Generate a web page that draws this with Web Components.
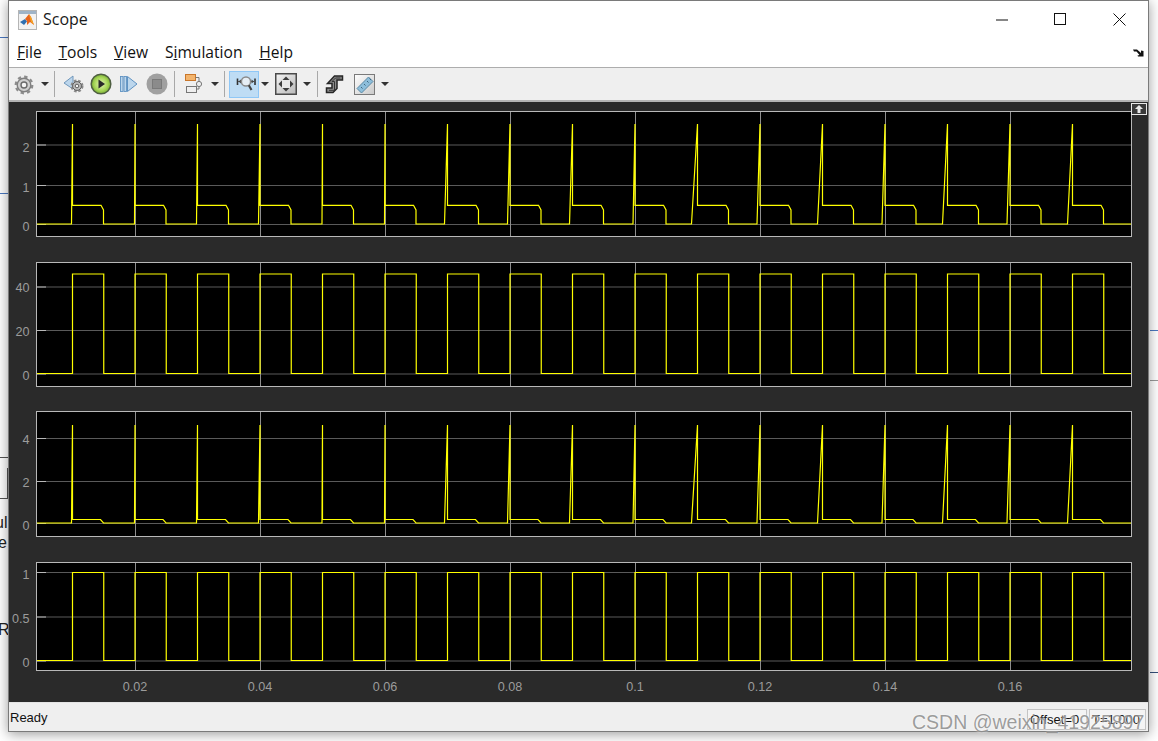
<!DOCTYPE html>
<html lang="en"><head><meta charset="utf-8"><title>Scope</title>
<style>
html,body{margin:0;padding:0;width:1158px;height:741px;overflow:hidden;background:#fff}
</style></head><body>
<desk-top>
  <span slot="scraps" style="position:absolute;left:0;top:37px;width:9px;height:1px;background:#4a78c0"></span>
  <span slot="scraps" style="position:absolute;left:0;top:193px;width:9px;height:1px;background:#4a78c0"></span>
  <span slot="scraps" style="position:absolute;left:0;top:457px;width:9px;height:1px;background:#555"></span>
  <span slot="scraps" style="position:absolute;left:0;top:498px;width:9px;height:1px;background:#555"></span>
  <span slot="scraps" style="position:absolute;left:7px;top:468px;width:1px;height:30px;background:#555"></span>
  <span slot="scraps" style="position:absolute;left:-5px;top:514px;font-size:16px">ul</span>
  <span slot="scraps" style="position:absolute;left:-2px;top:534px;font-size:16px">e</span>
  <span slot="scraps" style="position:absolute;left:-2px;top:621px;font-size:16px">R</span>
  <span slot="scraps" style="position:absolute;left:1150px;top:330px;width:8px;height:1px;background:#4a78c0"></span>
  <span slot="scraps" style="position:absolute;left:1150px;top:380px;width:8px;height:1px;background:#999"></span>
  <span slot="scraps" style="position:absolute;left:1150px;top:672px;width:8px;height:1px;background:#35507a"></span>
  <scope-window>
    <title-bar>Scope</title-bar>
    <menu-bar>
      <menu-item><u>F</u>ile</menu-item>
      <menu-item><u>T</u>ools</menu-item>
      <menu-item><u>V</u>iew</menu-item>
      <menu-item>S<u>i</u>mulation</menu-item>
      <menu-item><u>H</u>elp</menu-item>
    </menu-bar>
    <tool-bar></tool-bar>
    <scope-plots>
      <scope-axes kind="spike" h="126" mt="9" base="224" low="224" top="124" plat="205.3" fs="28.5" fe="31" corner="210" y0="111"
        ticks="2:145:152,1:185.5:192,0:224.5:231"></scope-axes>
      <scope-axes kind="square" h="125" mt="25" base="373.5" top="274" y0="262"
        ticks="40:287:292,20:330.5:336,0:374:380"></scope-axes>
      <scope-axes kind="spike" h="126" mt="24" base="523" low="523" top="425" plat="519.5" fs="28" fe="31" corner="523" y0="411"
        ticks="4:438.5:444,2:481.5:487,0:523.5:530"></scope-axes>
      <scope-axes kind="square" h="140" mt="25" base="660.5" top="572.5" y0="562" axis-bottom="670.5" xlabels="1"
        ticks="1:572.5:579,0.5:617:623,0:661:667"></scope-axes>
    </scope-plots>
    <status-bar></status-bar>
  </scope-window>
  <span slot="mark" style="position:absolute;left:912px;top:711px;font:19.5px 'Liberation Sans',sans-serif;color:rgba(125,125,125,.75);text-shadow:0 0 2px rgba(255,255,255,.9);white-space:nowrap;">CSDN @weixin_41925897</span>
</desk-top>
<script>
function def(name, html, init){
  customElements.define(name, class extends HTMLElement{
    constructor(){super();this.attachShadow({mode:'open'}).innerHTML=html;}
    connectedCallback(){ if(init) init.call(this,this.shadowRoot); }
  });
}
def('desk-top',`<style>
:host{display:block;position:relative;width:1158px;height:741px;overflow:hidden;background:#fff;font:14px 'Liberation Sans',sans-serif;color:#222}
</style><slot name="scraps"></slot><slot></slot><slot name="mark"></slot>`);

def('scope-window',`<style>
:host{position:absolute;left:8px;top:0;width:1139px;height:730px;border:1px solid #7a7a7a;background:#fff;display:flex;flex-direction:column;box-shadow:0 2px 12px rgba(0,0,0,.4)}
</style><slot></slot>`);

def('title-bar',`<style>
:host{display:flex;align-items:center;height:36px;flex:none;background:#fff;font:16px 'Open Sans',sans-serif;color:#1a1a1a}
svg.logo{margin-left:9px;margin-right:6px;margin-top:1px}
.t{padding-bottom:1px}
.b{width:58px;height:36px;display:flex;align-items:center;justify-content:center;box-sizing:border-box}
.n{padding-right:2px}
.s{margin-left:auto}
</style>
<svg class="logo" width="19" height="20" viewBox="0 0 19 20">
  <rect x=".5" y=".5" width="18" height="19" fill="#f2f2f2" stroke="#b5b5b5"/>
  <rect x="1" y="1" width="17" height="3" fill="#9fb4c8"/>
  <polygon points="2,12 7,9 9,11.5 6,15" fill="#2f6fb0"/>
  <polygon points="7,9 11,4 13,7 16,15 12,12 9,15 9,11" fill="#e8641c"/>
  <polygon points="11,4 13,7 16,15 13,12" fill="#f5a623"/>
</svg>
<span class="t"><slot></slot></span>
<span class="b s n"><svg width="12" height="2" viewBox="0 0 12 2" style="margin-top:1px"><rect width="12" height="1" y=".5" fill="#111"/></svg></span>
<span class="b n"><svg width="12" height="12" viewBox="0 0 12 12"><rect x=".5" y=".5" width="11" height="11" fill="none" stroke="#111"/></svg></span>
<span class="b"><svg width="13" height="13" viewBox="0 0 13 13"><path d="M.5 .5 12.5 12.5M12.5 .5 .5 12.5" stroke="#111" fill="none"/></svg></span>`);

def('menu-bar',`<style>
:host{display:flex;align-items:center;gap:16.800px;height:30px;flex:none;padding-left:8px;background:#fff;font:15.600px 'Open Sans',sans-serif;color:#111;position:relative}
svg{margin-left:auto;margin-right:4px;margin-top:0}
</style><slot></slot>
<svg width="11" height="9" viewBox="0 0 11 9"><path d="M0 1.5H4L8 5V2.5L10.5 3V8.5H5L4.5 7.5 6.5 7 3.5 3.5H1Z" fill="#111"/></svg>`);
def('menu-item',`<style>:host{display:inline-block;line-height:20px}</style><slot></slot>`);

const arrow=(ml)=>`<svg style="margin-left:${ml}px" width="8" height="4" viewBox="0 0 8 4"><polygon points="0,0 8,0 4,4" fill="#333"/></svg>`;
const sep=(ml)=>`<span class="sep" style="margin-left:${ml}px"></span>`;
def('tool-bar',`<style>
:host{display:flex;align-items:center;flex:none;height:32px;background:#efefef;border-top:1px solid #adadad;border-bottom:2px solid #b4b4b4;padding-left:5px;box-sizing:content-box}
.sep{width:1px;height:26px;background:#a8a8a8;flex:none}
svg{flex:none;display:block}
.on{margin-left:4px;width:28px;height:25px;background:#bedcf4;border:1px solid #8fc7f6;display:flex;align-items:center;justify-content:center;flex:none}
</style>
<svg width="20" height="20" viewBox="0 0 20 20" style="margin-top:1px">
  <circle cx="10" cy="10" r="8.300" fill="none" stroke="#8c8c8c" stroke-width="2.200" stroke-dasharray="3.400 3.100"/>
  <circle cx="10" cy="10" r="6.800" fill="#cfcfcf" stroke="#808080" stroke-width="1.400"/>
  <circle cx="10" cy="10" r="3" fill="#f4f4f4" stroke="#6a6a6a" stroke-width="1.400"/>
</svg>
${arrow(7)}${sep(5)}
<svg style="margin-left:8px" width="21" height="20" viewBox="0 0 21 20">
  <polygon points="1,9 10,2 10,15" fill="#bcd6ec" stroke="#7097bb"/>
  <circle cx="14" cy="12" r="5" fill="none" stroke="#8a8a8a" stroke-width="3" stroke-dasharray="2.400 1.600"/>
  <circle cx="14" cy="12" r="4.400" fill="#bdbdbd" stroke="#5d5d5d"/>
  <circle cx="14" cy="12" r="1.800" fill="#f2f2f2" stroke="#444" stroke-width=".8"/>
</svg>
<svg style="margin-left:6px" width="22" height="22" viewBox="0 0 22 22">
  <defs><radialGradient id="g" cx=".5" cy=".5" r=".55"><stop offset="0" stop-color="#e6f5b8"/><stop offset=".6" stop-color="#a8d75a"/><stop offset="1" stop-color="#6ea72a"/></radialGradient></defs>
  <circle cx="11" cy="11" r="9.800" fill="url(#g)" stroke="#4f5f42" stroke-width="1.500"/>
  <polygon points="8.500,6.500 15,11 8.500,15.500" fill="#2a2a2a"/>
</svg>
<svg style="margin-left:8px" width="18" height="20" viewBox="0 0 18 20">
  <rect x=".5" y="2.500" width="2.500" height="15" fill="#bcd6ec" stroke="#5f92c2" stroke-width=".9"/>
  <rect x="4" y="2.500" width="2.500" height="15" fill="#bcd6ec" stroke="#5f92c2" stroke-width=".9"/>
  <polygon points="7.500,2.500 17,10 7.500,17.500" fill="#bcd6ec" stroke="#5f92c2"/>
</svg>
<svg style="margin-left:8px" width="22" height="22" viewBox="0 0 22 22">
  <circle cx="11" cy="11" r="10.500" fill="#a0a0a0"/>
  <rect x="6.500" y="6.500" width="9" height="9" fill="#8b8b8b" stroke="#7a7a7a"/>
</svg>
${sep(6)}
<svg style="margin-left:9px" width="20" height="22" viewBox="0 0 20 22">
  <rect x="1.500" y="1.500" width="10" height="6" fill="#f3b46c" stroke="#c9762a"/>
  <path d="M11.500 4.500H15V9" fill="none" stroke="#777"/>
  <circle cx="15" cy="11" r="2.600" fill="#eee" stroke="#777"/>
  <rect x="2.500" y="13.500" width="10" height="6" fill="#efefef" stroke="#777"/>
  <path d="M12.500 16H15V13.500" fill="none" stroke="#777"/>
</svg>
${arrow(7)}${sep(5)}
<span class="on"><svg width="26" height="22" viewBox="0 0 26 22">
  <path d="M6.500 5.500V12M24 5.500V12" stroke="#333" stroke-width="1.600"/>
  <path d="M7 8.500H10.500M19.500 8.500H23.500" stroke="#555" stroke-width="1.200"/>
  <polygon points="7.500,8.500 10,6.500 10,10.500" fill="#444"/>
  <polygon points="23,8.500 20.500,6.500 20.500,10.500" fill="#444"/>
  <circle cx="15" cy="8.500" r="4.600" fill="#e6eef5" stroke="#8a8a8a" stroke-width="1.500"/>
  <path d="M17.800 12.300 20.500 17" stroke="#444" stroke-width="2.200"/>
</svg></span>
${arrow(2)}
<svg style="margin-left:6px" width="22" height="22" viewBox="0 0 22 22">
  <defs><linearGradient id="fg" x1="0" y1="0" x2="1" y2="1"><stop offset="0" stop-color="#f4f4f4"/><stop offset="1" stop-color="#b8b8b8"/></linearGradient></defs>
  <rect x=".75" y=".75" width="20.500" height="20.500" fill="url(#fg)" stroke="#4a4a4a" stroke-width="1.500"/>
  <polygon points="11,3.500 14.500,7 7.500,7" fill="#3c3c3c"/><polygon points="11,18.500 14.500,15 7.500,15" fill="#3c3c3c"/>
  <polygon points="3.500,11 7,7.500 7,14.500" fill="#3c3c3c"/><polygon points="18.500,11 15,7.500 15,14.500" fill="#3c3c3c"/>
  <rect x="7" y="7" width="8" height="8" fill="#e8e8e8"/>
</svg>
${arrow(6)}${sep(6)}
<svg style="margin-left:7px" width="19" height="20" viewBox="0 0 19 20">
  <path d="M1.500 18.500V14H7V9.500H2.500L9.500 2H17.500V6H12V14.500L8 18.500Z" fill="#8a8a8a" stroke="#262626" stroke-width="1.500"/>
  <path d="M4 16.300H9.500V7.500H7L10.500 4H15.500" fill="none" stroke="#333" stroke-width="1"/>
</svg>
<svg style="margin-left:10px" width="21" height="21" viewBox="0 0 21 21">
  <defs><linearGradient id="rg" x1="0" y1="0" x2="1" y2="1"><stop offset="0" stop-color="#fff"/><stop offset="1" stop-color="#c9c9c9"/></linearGradient></defs>
  <rect x=".5" y=".5" width="20" height="20" fill="url(#rg)" stroke="#7a7a7a"/>
  <polygon points="3,14.500 14.500,3 19,7.500 7.500,19" fill="#8dbedb" stroke="#5b8aa6"/>
  <path d="M7 13 8.500 14.500M10 10 11.500 11.500M13 7 14.500 8.500M15.500 4.500 17 6" stroke="#3d6780"/>
</svg>
${arrow(6)}`);

def('scope-plots',`<style>
:host{display:block;flex:none;height:600px;background:#2a2a2a;position:relative;overflow:hidden}
.up{position:absolute;left:1122px;top:1px;width:14px;height:10px;border:1px solid #e8e8e8;background:#3a3a3a}
svg{display:block}
</style><slot></slot>
<span class="up"><svg width="14" height="10" viewBox="0 0 14 10"><polygon points="7,1 11,5 8.500,5 8.500,9 5.500,9 5.500,5 3,5" fill="#e8e8e8"/></svg></span>`);

def('scope-axes',`<style>
:host{display:block}
svg{display:block}
text{font:12.600px 'Liberation Sans',sans-serif;fill:#9c9c9c}
</style><svg></svg>`, function(r){
  const a=k=>this.getAttribute(k), n=k=>parseFloat(a(k));
  const y0=n('y0'), h=n('h');
  this.style.marginTop=a('mt')+'px';
  this.style.height=h+'px';
  const bottom=a('axis-bottom')?n('axis-bottom'):y0+h-.5;
  const L=36.5,R=1131.5,T=y0+.5;
  const xs=[];for(let k=0;k<17;k++)xs.push(72.5+62.5*k);
  const W=[1,.5,1,1.5,.5,.5,3,2.5,3,2,6,3,5,3,5,3,5];
  let p=[];
  if(a('kind')==='spike'){
    const base=n('base'),top=n('top'),plat=n('plat'),fs=n('fs'),fe=n('fe'),c=n('corner');
    p.push([L,base]);
    xs.forEach((x,i)=>{
      p.push([x-W[i],base],[x,top],[x,plat],[x+fs,plat],[x+fe,c],[x+fe,base]);
    });
    p.push([R,base]);
  }else{
    const base=n('base'),top=n('top');
    p.push([L,base]);
    xs.forEach(x=>{p.push([x,base],[x,top],[x+31.25,top],[x+31.25,base]);});
    p.push([R,base]);
  }
  let s='';
  a('ticks').split(',').forEach(t=>{
    const [lab,y,by]=t.split(':');
    s+=`<path d="M${L} ${y}H${R}" stroke="#5a5a5a"/><path d="M${L} ${y}H46" stroke="#b8b8b8"/>`;
    s+=`<text x="29.500" y="${by}" text-anchor="end">${lab}</text>`;
  });
  let xl='';
  ['0.02','0.04','0.06','0.08','0.1','0.12','0.14','0.16'].forEach((lab,i)=>{
    const x=135.5+125*i;
    s+=`<path d="M${x} ${T}V${bottom}" stroke="#8e8e8e"/>`;
    if(a('xlabels'))xl+=`<text x="${x-.5}" y="691" text-anchor="middle">${lab}</text>`;
  });
  s+=`<polyline fill="none" stroke="#ffff00" stroke-width="1.200" points="${p.map(q=>q.join(',')).join(' ')}"/>`;
  s+=`<rect x="${L}" y="${T}" width="${R-L}" height="${bottom-T}" fill="none" stroke="#b8b8b8"/>`;
  const svg=r.querySelector('svg');
  svg.setAttribute('width',1139);svg.setAttribute('height',h);
  svg.setAttribute('viewBox',`9 ${y0} 1139 ${h}`);
  const rect=`<rect x="${L}" y="${T}" width="${R-L}" height="${bottom-T}" fill="#000"/>`;
  svg.innerHTML=rect+s+xl;
});

def('status-bar',`<style>
:host{display:flex;align-items:center;flex:1;background:#efefef;border-top:1px solid #e4e4e4;font:13px 'Liberation Sans',sans-serif;color:#111;padding-left:1px;box-sizing:border-box}
.box{border:1px solid #c4c4c4;height:19px;line-height:19px;padding-left:2px;box-sizing:content-box;margin-top:4px;background:#f4f4f4}
.r{margin-left:auto;width:56px}
.o{margin-left:2px;width:53px;margin-right:2px}
</style><span>Ready</span><span class="box r">Offset=0</span><span class="box o">T=1.000</span>`);
</script>
</body></html>
